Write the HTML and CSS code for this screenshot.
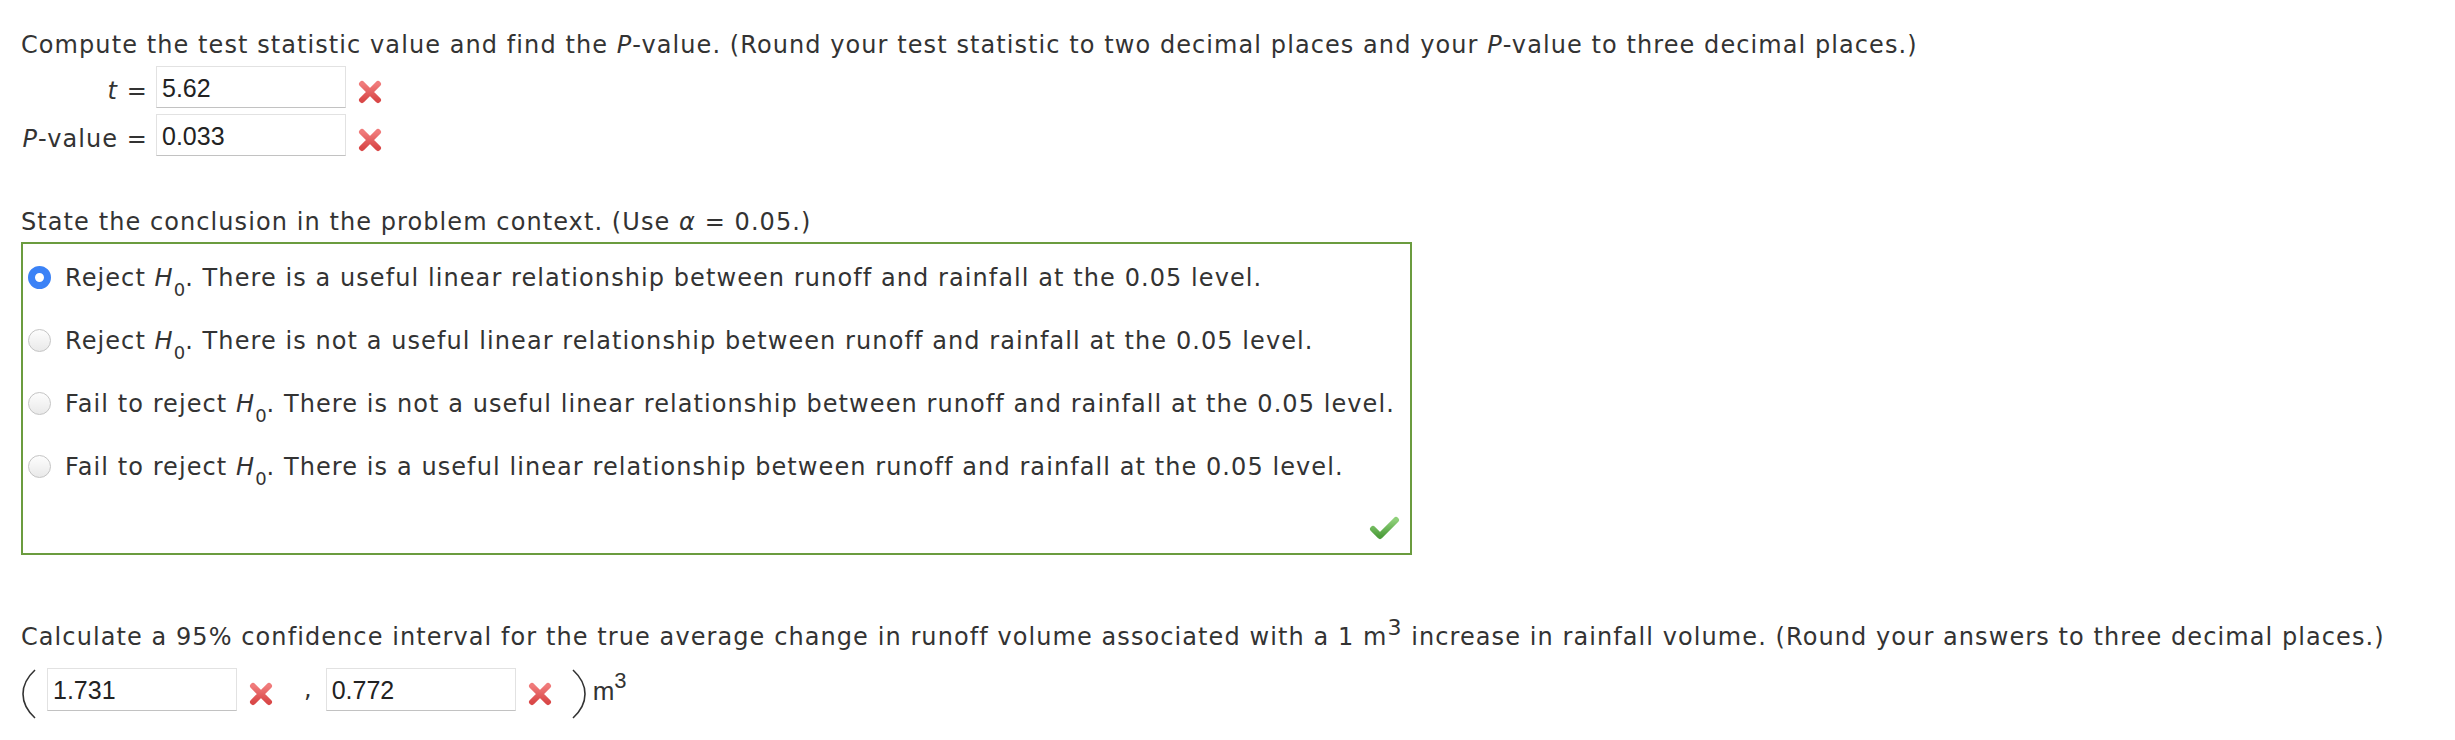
FILE: index.html
```html
<!DOCTYPE html>
<html lang="en">

<head>
    <meta charset="UTF-8">
    <title>Runoff and Rainfall</title>
    <link rel="stylesheet" href="styles.css">
</head>

<body>
    <div class="question">
        <p class="prompt">Compute the test statistic value and find the <i>P</i>-value. (Round your test statistic to two decimal places and your <i>P</i>-value to three decimal places.)</p>

        <div class="answer-grid">
            <label class="answer-label" for="tValue"><i>t</i> =</label>
            <input class="answer-box" id="tValue" type="text" value="5.62">
            <svg class="mark-wrong" viewBox="0 0 26 24"><use href="#cross"></use></svg>

            <label class="answer-label" for="pValue"><i>P</i>-value =</label>
            <input class="answer-box" id="pValue" type="text" value="0.033">
            <svg class="mark-wrong" viewBox="0 0 26 24"><use href="#cross"></use></svg>
        </div>

        <p class="prompt section">State the conclusion in the problem context. (Use <i>α</i> = 0.05.)</p>

        <div class="choices">
            <label class="choice">
                <span class="radio checked"></span>
                <span>Reject <i>H</i><sub>0</sub>. There is a useful linear relationship between runoff and rainfall at the 0.05 level.</span>
            </label>
            <label class="choice">
                <span class="radio"></span>
                <span>Reject <i>H</i><sub>0</sub>. There is not a useful linear relationship between runoff and rainfall at the 0.05 level.</span>
            </label>
            <label class="choice">
                <span class="radio"></span>
                <span>Fail to reject <i>H</i><sub>0</sub>. There is not a useful linear relationship between runoff and rainfall at the 0.05 level.</span>
            </label>
            <label class="choice">
                <span class="radio"></span>
                <span>Fail to reject <i>H</i><sub>0</sub>. There is a useful linear relationship between runoff and rainfall at the 0.05 level.</span>
            </label>
            <div class="choices-footer">
                <svg class="mark-right" viewBox="0 0 31 24">
                    <defs>
                        <linearGradient id="greenGrad" x1="0" y1="0" x2="0" y2="1">
                            <stop offset="0" stop-color="#8fd07a" />
                            <stop offset="1" stop-color="#4e9e3c" />
                        </linearGradient>
                    </defs>
                    <path d="M4 13 L11 20 L27 4" fill="none" stroke="url(#greenGrad)" stroke-width="6" stroke-linecap="round" stroke-linejoin="round" />
                </svg>
            </div>
        </div>

        <p class="prompt section last">Calculate a 95% confidence interval for the true average change in runoff volume associated with a 1 m<sup>3</sup> increase in rainfall volume. (Round your answers to three decimal places.)</p>

        <div class="interval">
            <svg class="paren" viewBox="0 0 16 50"><path d="M14 1 Q2 12 2 25 Q2 38 14 49" fill="none" stroke="#333" stroke-width="1.6" /></svg>
            <input class="answer-box" type="text" value="1.731">
            <svg class="mark-wrong" viewBox="0 0 26 24"><use href="#cross"></use></svg>
            <span class="comma">,</span>
            <input class="answer-box" type="text" value="0.772">
            <svg class="mark-wrong" viewBox="0 0 26 24"><use href="#cross"></use></svg>
            <svg class="paren" viewBox="0 0 16 50"><path d="M2 1 Q14 12 14 25 Q14 38 2 49" fill="none" stroke="#333" stroke-width="1.6" /></svg>
            <span class="unit">m<sup>3</sup></span>
        </div>
    </div>

    <!-- shared red cross -->
    <svg class="defs" width="0" height="0">
        <defs>
            <linearGradient id="redGrad" x1="0" y1="0" x2="0" y2="1">
                <stop offset="0" stop-color="#f07b7b" />
                <stop offset="1" stop-color="#d94848" />
            </linearGradient>
            <g id="cross">
                <path d="M5 4 L21 20 M21 4 L5 20" fill="none" stroke="url(#redGrad)" stroke-width="6" stroke-linecap="round" />
            </g>
        </defs>
    </svg>
</body>

</html>
```

FILE: styles.css
```css
body {
    margin: 0;
    background-color: #fff;
    color: #333;
    font-family: "DejaVu Sans", Verdana, sans-serif;
    font-size: 24px;
    letter-spacing: 1.08px;
}

.question {
    padding: 30px 21px 0 21px;
}

.prompt {
    margin: 0;
    line-height: 30px;
    white-space: nowrap;
}

.prompt.section {
    margin-top: 51px;
}

.prompt.section.last {
    margin-top: 67px;
}

sup {
    font-size: 22px;
    line-height: 0;
    vertical-align: 10px;
}

sub {
    font-size: 18px;
    line-height: 0;
    vertical-align: -10px;
    font-style: normal;
    letter-spacing: 0;
}

.answer-grid {
    display: grid;
    grid-template-columns: 127px 190px auto;
    column-gap: 8px;
    row-gap: 6px;
    align-items: center;
    margin-top: 6px;
}

.answer-label {
    justify-self: end;
    white-space: nowrap;
    padding-top: 8px;
}

.answer-box {
    box-sizing: border-box;
    width: 190px;
    height: 42px;
    margin: 0;
    padding: 2px 0 0 5px;
    border: 1px solid #e2e2e2;
    border-bottom-color: #c2c2c2;
    border-radius: 0;
    font-family: "Liberation Sans", Arial, sans-serif;
    font-size: 25px;
    letter-spacing: 0;
    color: #222;
    background-color: #fff;
}

.mark-wrong {
    width: 26px;
    height: 24px;
    margin: 10px 0 0 3px;
}

.choices {
    margin-top: 5px;
    width: 1391px;
    box-sizing: border-box;
    border: 2px solid #6b9c3f;
    padding-top: 2px;
}

.choice {
    display: flex;
    align-items: center;
    height: 63px;
}

.radio {
    box-sizing: border-box;
    width: 23px;
    height: 23px;
    margin: 0 14px 0 5px;
    border-radius: 50%;
    border: 1px solid #c4c4c4;
    background: linear-gradient(#fdfdfd, #e9e9e9);
    flex-shrink: 0;
}

.radio.checked {
    border: 7px solid #3b82f6;
    background: #fff;
}

.choices-footer {
    display: flex;
    justify-content: flex-end;
    padding: 18px 10px 13px 0;
}

.mark-right {
    width: 31px;
    height: 24px;
}

.interval {
    display: flex;
    align-items: flex-start;
    margin-top: 16px;
}

.interval .answer-box {
    height: 43px;
}

.paren {
    width: 16px;
    height: 50px;
    margin-top: 1px;
}

.interval .paren:first-child {
    margin-right: 10px;
}

.interval .mark-wrong {
    margin: 14px 0 0 11px;
}

.comma {
    margin: 6px 14px 0 30px;
    line-height: 30px;
    letter-spacing: 0;
}

.interval .mark-wrong + .paren {
    margin-left: 18px;
}

.unit {
    margin: 8px 0 0 6px;
    line-height: 30px;
    font-family: "Liberation Sans", Arial, sans-serif;
    font-size: 26px;
    letter-spacing: 0;
}

.unit sup {
    font-size: 22px;
    vertical-align: 12px;
}
```
